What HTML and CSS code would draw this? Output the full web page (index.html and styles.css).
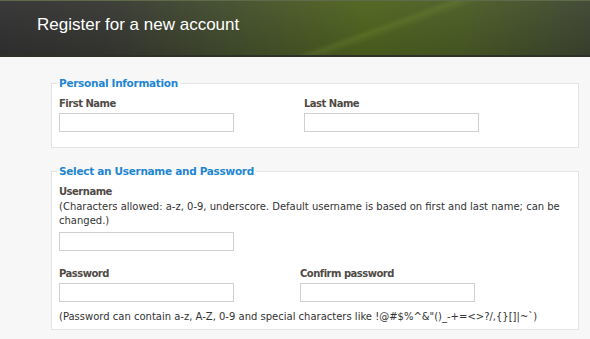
FILE: index.html
```html
<!DOCTYPE html>
<html lang="en">
<head>
    <meta charset="UTF-8">
    <title>Register for a new account</title>
    <link rel="stylesheet" href="styles.css">
</head>
<body>
    <!-- Top banner -->
    <div class="banner">
        <h1>Register for a new account</h1>
    </div>

    <main>
        <form id="registerForm">
            <fieldset>
                <legend>Personal Information</legend>
                <div class="row">
                    <div class="field name-col">
                        <label for="firstName">First Name</label>
                        <input type="text" id="firstName">
                    </div>
                    <div class="field">
                        <label for="lastName">Last Name</label>
                        <input type="text" id="lastName">
                    </div>
                </div>
            </fieldset>

            <fieldset class="account">
                <legend>Select an Username and Password</legend>
                <div class="field">
                    <label for="username">Username</label>
                    <p class="hint">(Characters allowed: a-z, 0-9, underscore. Default username is based on first and last name; can be changed.)</p>
                    <input type="text" id="username">
                </div>
                <div class="row pass-row">
                    <div class="field pass-col">
                        <label for="password">Password</label>
                        <input type="password" id="password">
                    </div>
                    <div class="field">
                        <label for="confirm">Confirm password</label>
                        <input type="password" id="confirm">
                    </div>
                </div>
                <p class="hint after">(Password can contain a-z, A-Z, 0-9 and special characters like !@#$%^&amp;"()_-+=&lt;&gt;?/,{}[]|~`)</p>
            </fieldset>
        </form>
    </main>
</body>
</html>
```

FILE: styles.css
```css
/* Banner */
body {
    margin: 0;
    background-color: #f7f7f7;
    font-family: "DejaVu Sans", Verdana, sans-serif;
    font-size: 10px;
}

.banner {
    height: 54px;
    border-top: 1px solid #5f6a4a;
    border-bottom: 2px solid #2e3128;
    background:
        linear-gradient(160deg, rgba(255,255,255,0) 60%, rgba(140,170,60,0.18) 62%, rgba(255,255,255,0) 65%),
        linear-gradient(to bottom, rgba(255,255,255,0.03), rgba(0,0,0,0.12)),
        linear-gradient(to right, #333333 0%, #383934 18%, #45502e 40%, #50651f 62%, #4c5e26 78%, #3f4632 100%);
    display: flex;
    align-items: center;
}

.banner h1 {
    margin: 0 0 6px 37px;
    color: #ffffff;
    font-family: "Liberation Sans", Arial, sans-serif;
    font-size: 17px;
    font-weight: normal;
}

/* Form */
main {
    padding: 19px 0 0 51px;
}

fieldset {
    width: 528px;
    box-sizing: border-box;
    margin: 0 0 16px 0;
    padding: 7px 7px 15px 7px;
    border: 1px solid #e4e4e4;
    background: #ffffff;
}

fieldset.account {
    padding-bottom: 5px;
}

legend {
    margin-left: -2px;
    padding: 0 2px;
    color: #1f86d2;
    font-weight: bold;
    font-size: 10.5px;
    letter-spacing: -0.3px;
    line-height: 14px;
}

.row {
    display: flex;
}

.name-col {
    width: 245px;
}

.pass-col {
    width: 241px;
}

.pass-row {
    margin-top: 16px;
}

label {
    display: block;
    margin-bottom: 2px;
    color: #4f4a45;
    font-weight: bold;
    letter-spacing: -0.5px;
    line-height: 14px;
}

input {
    display: block;
    width: 175px;
    height: 19px;
    box-sizing: border-box;
    margin: 0;
    padding: 2px 3px;
    border: 1px solid #d0d0d0;
    background: #ffffff;
}

.hint {
    margin: -1px 0 4px 0;
    color: #333333;
    line-height: 14px;
}

.hint.after {
    margin: 8px 0 0 0;
}
```
